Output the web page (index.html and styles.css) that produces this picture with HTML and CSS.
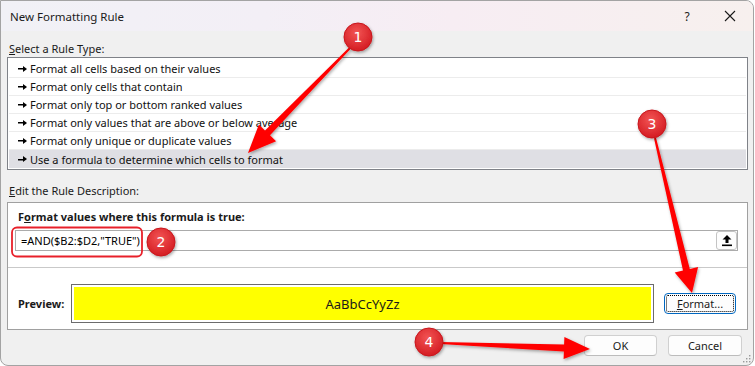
FILE: index.html
```html
<!DOCTYPE html>
<html lang="en">
<head>
    <meta charset="UTF-8">
    <title>New Formatting Rule</title>
    <link rel="stylesheet" href="styles.css">
</head>
<body>
    <div class="window">
        <div class="titlebar">
            <span class="title">New Formatting Rule</span>
            <span class="help">?</span>
            <span class="close">
                <svg width="12" height="12" viewBox="0 0 12 12"><path d="M1 1L11 11M11 1L1 11" stroke="#1a1a1a" stroke-width="1.1" fill="none"/></svg>
            </span>
        </div>
        <div class="content">
            <div class="label"><u>S</u>elect a Rule Type:</div>
            <ul class="rule-list">
                <li><span class="bullet"></span>Format all cells based on their values</li>
                <li><span class="bullet"></span>Format only cells that contain</li>
                <li><span class="bullet"></span>Format only top or bottom ranked values</li>
                <li><span class="bullet"></span>Format only values that are above or below average</li>
                <li><span class="bullet"></span>Format only unique or duplicate values</li>
                <li class="selected"><span class="bullet"></span>Use a formula to determine which cells to format</li>
            </ul>
            <div class="label label-edit"><u>E</u>dit the Rule Description:</div>
            <div class="panel">
                <div class="panel-title">F<u>o</u>rmat values where this formula is true:</div>
                <div class="formula">
                    <span class="formula-text">=AND($B2:$D2,"TRUE")</span>
                    <span class="collapse-btn">
                        <svg width="12" height="13" viewBox="0 0 12 13"><path d="M6 1L1.5 5.5H4.5V9H7.5V5.5H10.5Z" fill="#000"/><rect x="1" y="10.5" width="10" height="1.6" fill="#000"/></svg>
                    </span>
                </div>
                <div class="separator"></div>
                <div class="preview-row">
                    <span class="preview-label">Preview:</span>
                    <div class="preview-box"><div class="preview-fill">AaBbCcYyZz</div></div>
                    <span class="btn format-btn"><u>F</u>ormat...</span>
                </div>
            </div>
            <div class="actions">
                <span class="btn ok-btn">OK</span>
                <span class="btn cancel-btn">Cancel</span>
            </div>
        </div>
        <svg class="grip" width="8" height="8" viewBox="0 0 8 8">
            <rect x="6" y="0" width="1.4" height="1.4" fill="#9a9a9a"/>
            <rect x="3" y="3" width="1.4" height="1.4" fill="#9a9a9a"/>
            <rect x="6" y="3" width="1.4" height="1.4" fill="#9a9a9a"/>
            <rect x="0" y="6" width="1.4" height="1.4" fill="#9a9a9a"/>
            <rect x="3" y="6" width="1.4" height="1.4" fill="#9a9a9a"/>
            <rect x="6" y="6" width="1.4" height="1.4" fill="#9a9a9a"/>
        </svg>
    </div>

    <!-- callouts drawn over the dialog -->
    <svg class="annotations" width="755" height="366" viewBox="0 0 755 366">
        <defs>
            <radialGradient id="dot" cx="45%" cy="35%" r="65%">
                <stop offset="0" stop-color="#f25454"/>
                <stop offset="1" stop-color="#d41c22"/>
            </radialGradient>
            <filter id="shade" x="-30%" y="-30%" width="160%" height="160%">
                <feDropShadow dx="1" dy="1.5" stdDeviation="1.5" flood-color="#000" flood-opacity="0.35"/>
            </filter>
        </defs>
        <g fill="#ff0000" filter="url(#shade)">
            <polygon points="350.7,48.7 270,135.3 276.1,141.3 248,153 258.9,124.5 265,130.5 349.3,47.3"/>
            <polygon points="656,137.8 689.8,268.9 698.1,266.9 692,293 674.7,272.5 683,270.5 654,138.2"/>
            <polygon points="440,342 564.1,344.5 564.4,337 590,349 563.6,359 563.9,351.5 440,344"/>
        </g>
        <rect x="12" y="227.5" width="130" height="29" rx="5" fill="none" stroke="#e8202a" stroke-width="1.8"/>
        <g class="badge" filter="url(#shade)">
            <circle cx="358" cy="37" r="14" fill="url(#dot)" stroke="#c8161c" stroke-width="1"/>
            <circle cx="161" cy="242" r="14" fill="url(#dot)" stroke="#c8161c" stroke-width="1"/>
            <circle cx="652" cy="124" r="14" fill="url(#dot)" stroke="#c8161c" stroke-width="1"/>
            <circle cx="429" cy="342" r="14" fill="url(#dot)" stroke="#c8161c" stroke-width="1"/>
        </g>
        <g class="badge-num">
            <text x="358" y="42">1</text>
            <text x="161" y="247">2</text>
            <text x="652" y="129">3</text>
            <text x="429" y="347">4</text>
        </g>
    </svg>
</body>
</html>
```

FILE: styles.css
```css
body {
    margin: 0;
    padding: 0;
    background-color: #ffffff;
    font-family: 'Noto Sans', 'Open Sans', sans-serif;
    font-size: 11px;
    color: #000;
}
.window {
    position: relative;
    width: 752px;
    height: 364px;
    border: 1px solid #a3a3a3;
    border-radius: 0 8px 8px 8px;
    background-color: #f0f0f0;
    overflow: hidden;
}
.titlebar {
    height: 30px;
    display: flex;
    align-items: center;
    background: linear-gradient(90deg, #f1f1f6 0%, #f3eff6 35%, #f7edf3 60%, #f7f0ee 100%);
}
.title {
    flex: 1;
    padding-left: 9px;
    font-size: 11.5px;
    color: #1a1a1a;
}
.help {
    width: 20px;
    font-size: 12px;
    color: #1a1a1a;
    text-align: center;
    margin-right: 27px;
}
.close {
    width: 12px;
    height: 12px;
    margin-right: 17px;
    display: flex;
}
.content {
    padding: 11px 5px 0 6px;
}
.label {
    height: 14px;
    line-height: 14px;
    padding-left: 2px;
    color: #1a1a1a;
}
.label-edit {
    margin-top: 14px;
}
.rule-list {
    list-style: none;
    margin: 1px 0 0 0;
    padding: 2px 1px 1px 1px;
    background: #fff;
    border: 1px solid #7f8288;
}
.rule-list li {
    height: 17px;
    line-height: 17px;
    border-bottom: 1px solid #ececec;
    padding-left: 9px;
    display: flex;
    align-items: center;
    color: #111;
}
.rule-list li.selected {
    background: #dfdfe4;
    border-bottom: none;
    height: 18px;
}
.bullet {
    width: 10px;
    height: 7px;
    margin-right: 2px;
    background:
        linear-gradient(#000, #000) 0 3px / 6px 1.5px no-repeat;
    position: relative;
}
.bullet::after {
    content: '';
    position: absolute;
    left: 5px;
    top: 0.5px;
    border-left: 4px solid #000;
    border-top: 3px solid transparent;
    border-bottom: 3px solid transparent;
}
.panel {
    margin-top: 4px;
    background: #fff;
    border: 1px solid #a0a0a0;
    padding: 7px 9px 6px 7px;
}
.panel-title {
    height: 14px;
    line-height: 14px;
    padding-left: 3px;
    font-weight: bold;
    color: #1a1a1a;
}
.formula {
    margin-top: 6px;
    height: 19px;
    border: 1px solid #ababab;
    display: flex;
    align-items: center;
    justify-content: space-between;
}
.formula-text {
    padding-left: 5px;
    font-size: 11px;
    color: #000;
}
.collapse-btn {
    width: 19px;
    height: 17px;
    border: 1px solid #c4c4c4;
    border-radius: 3px;
    background: #fdfdfd;
    display: flex;
    align-items: center;
    justify-content: center;
}
.separator {
    margin: 16px -9px 0 -7px;
    height: 1px;
    background: #c9c9c9;
}
.preview-row {
    margin-top: 16px;
    display: flex;
    align-items: center;
    padding-left: 3px;
}
.preview-label {
    width: 53px;
    flex-shrink: 0;
    font-weight: bold;
    color: #1a1a1a;
}
.preview-box {
    width: 577px;
    height: 33px;
    border: 1px solid #6c6c6c;
    padding: 2px;
    background: #fff;
}
.preview-fill {
    height: 33px;
    background: #ffff00;
    display: flex;
    align-items: center;
    justify-content: center;
    font-size: 13px;
    color: #1a1a1a;
}
.btn {
    display: flex;
    align-items: center;
    justify-content: center;
    box-sizing: border-box;
    height: 21px;
    background: #fdfdfd;
    border: 1px solid #d0d0d0;
    border-bottom-color: #bcbcbc;
    border-radius: 4px;
    font-size: 11px;
    color: #1a1a1a;
}
.format-btn {
    width: 72px;
    margin-left: 10px;
    border: 1px solid #0067c0;
    outline: 1px dotted #000;
    outline-offset: -3px;
}
.actions {
    margin-top: 5px;
    display: flex;
    justify-content: flex-end;
    gap: 11px;
    padding-right: 6px;
}
.ok-btn {
    width: 73px;
}
.cancel-btn {
    width: 74px;
}
.grip {
    position: absolute;
    right: 2px;
    bottom: 2px;
}
.annotations {
    position: absolute;
    left: 0;
    top: 0;
    pointer-events: none;
}
.badge-num text {
    fill: #fff;
    font-family: 'DejaVu Sans', sans-serif;
    font-size: 14px;
    text-anchor: middle;
}
```
